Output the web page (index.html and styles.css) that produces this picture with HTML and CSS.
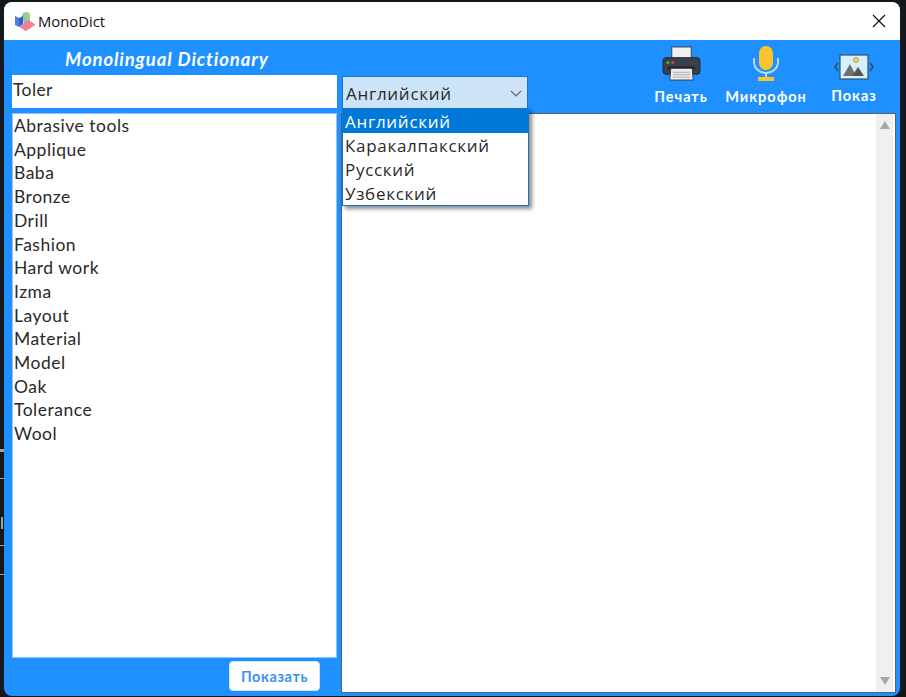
FILE: index.html
```html
<!DOCTYPE html>
<html lang="ru">
<head>
<meta charset="utf-8">
<title>MonoDict</title>
<link rel="stylesheet" href="styles.css">
</head>
<body>
<div class="behind" aria-hidden="true">
  <i class="bit bit-a"></i><i class="bit bit-b"></i><i class="bit bit-c"></i><i class="bit bit-d"></i><i class="bit bit-e"></i>
</div>
<div class="window">
  <header class="titlebar">
    <svg class="app-icon" viewBox="0 0 22 20" width="22" height="20">
      <path d="M7 8l2-6 4-1 3 2v7l-5 3z" fill="#8cc8a0"/>
      <path d="M10 3l3-2 3 2v6l-3 1V4z" fill="#a8cf7e"/>
      <path d="M1 5l4 2v9l-4-2z" fill="#4a7fe0"/>
      <path d="M5 7l4-2v8l-4 3z" fill="#2f62c4"/>
      <path d="M6 15l8-6 7 4-9 6z" fill="#f27f97"/>
      <path d="M6 15l6 4v1l-6-4z" fill="#d9536f"/>
      <path d="M12 19l9-6v1l-9 6z" fill="#e56a84"/>
    </svg>
    <span class="app-name">MonoDict</span>
    <svg class="close" viewBox="0 0 14 14" width="14" height="14"><path d="M1 1l12 12M13 1L1 13" stroke="#111" stroke-width="1.2" fill="none"/></svg>
  </header>
  <main class="content">
    <section class="left">
      <h1 class="brand">Monolingual Dictionary</h1>
      <div class="search">Toler</div>
      <ul class="words">
        <li>Abrasive tools</li><li>Applique</li><li>Baba</li><li>Bronze</li><li>Drill</li><li>Fashion</li><li>Hard work</li><li>Izma</li><li>Layout</li><li>Material</li><li>Model</li><li>Oak</li><li>Tolerance</li><li>Wool</li>
      </ul>
      <div class="actions"><button class="show">Показать</button></div>
    </section>
    <section class="right">
      <div class="topbar">
        <div class="select">
          <span>Английский</span>
          <svg viewBox="0 0 12 7" width="12" height="7"><path d="M1 1l5 5 5-5" stroke="#666" stroke-width="1.2" fill="none"/></svg>
          <ul class="menu">
            <li class="active">Английский</li><li>Каракалпакский</li><li>Русский</li><li>Узбекский</li>
          </ul>
        </div>
        <nav class="tools">
          <div class="tool tool-print">
            <svg viewBox="0 0 40 36" width="39" height="35">
              <rect x="10" y="1" width="20" height="14" fill="#f0f0f0" stroke="#3a3f48" stroke-width="1"/>
              <rect x="1" y="12" width="38" height="17" rx="3" fill="#3a3f4a" stroke="#23262c"/>
              <circle cx="6" cy="17" r="1.6" fill="#35b36b"/><circle cx="11" cy="17" r="1.6" fill="#d1492e"/>
              <rect x="6" y="21" width="28" height="3" fill="#1e2126"/>
              <path d="M9 23h22l1 12H8z" fill="#eeeeee" stroke="#3a3f48"/>
              <path d="M11 27h18M11 29.500h18M11 32h18" stroke="#aaa" stroke-width="1"/>
            </svg>
            <span>Печать</span>
          </div>
          <div class="tool tool-mic">
            <svg viewBox="0 0 28 36" width="28" height="36">
              <rect x="7" y="0" width="14" height="24" rx="7" fill="#fcc42c"/>
              <path d="M2 12v4a12 11 0 0 0 24 0v-4" fill="none" stroke="#bcd8f8" stroke-width="2"/>
              <path d="M14 27v4" stroke="#bcd8f8" stroke-width="2"/>
              <rect x="6" y="31" width="16" height="4" fill="#fcc42c"/>
            </svg>
            <span>Микрофон</span>
          </div>
          <div class="tool tool-show">
            <svg viewBox="0 0 42 26" width="42" height="26">
              <path d="M5 9l-3 4 3 4M37 9l3 4-3 4" fill="none" stroke="#27506e" stroke-width="1.600"/>
              <rect x="7" y="1" width="28" height="24" fill="#d8f0fb" stroke="#33526a" stroke-width="1.200"/>
              <circle cx="23" cy="6" r="2.500" fill="#f4d65a" stroke="#8a7a30" stroke-width=".6"/>
              <path d="M10 22l7-12 6 12z" fill="#6f6f6f"/>
              <path d="M19 22l6-9 6 9z" fill="#555"/>
            </svg>
            <span>Показ</span>
          </div>
        </nav>
      </div>
      <div class="panel">
        <div class="scrollbar">
          <svg viewBox="0 0 12 8" width="12" height="8"><path d="M1 8l5-8 5 8z" fill="#a8a8a8"/></svg>
          <svg viewBox="0 0 12 8" width="12" height="8"><path d="M1 0l5 8 5-8z" fill="#a8a8a8"/></svg>
        </div>
      </div>
    </section>
  </main>
</div>
</body>
</html>
```
FILE: styles.css
```css
* { box-sizing: border-box; }
html, body { margin: 0; height: 100%; }
body {
  background: #14171c;
  padding: 2px 6px 1px 4px;
  font-family: "Lato", "Liberation Sans", sans-serif;
  overflow: hidden;
}
.behind { position: absolute; left: 0; top: 0; width: 4px; height: 697px; overflow: hidden; }
.bit { position: absolute; left: 0; width: 4px; height: 1px; background: #9aa6b2; }
.bit-a { top: 449px; height: 3px; }
.bit-b { top: 478px; }
.bit-c { top: 517px; left: 1px; width: 2px; height: 12px; }
.bit-d { top: 545px; }
.bit-e { top: 574px; }
.window {
  height: 694px;
  display: flex;
  flex-direction: column;
  background: #1e90ff;
  border-radius: 8px;
  overflow: hidden;
}
.titlebar {
  height: 38px;
  flex: none;
  background: #fff;
  display: flex;
  align-items: center;
  padding-left: 10px;
  padding-right: 14px;
}
.app-icon { margin-right: 2px; }
.app-name { font-family: "Open Sans", sans-serif; font-size: 14.800px; color: #111; }
.close { margin-left: auto; }
.content {
  flex: 1;
  display: flex;
  padding-left: 8px;
  padding-right: 4px;
}
.left { width: 325px; flex: none; display: flex; flex-direction: column; margin-right: 4px; }
.brand {
  height: 35px;
  margin: 0;
  padding: 7px 0 0 53px;
  font-family: "Lato", sans-serif;
  font-style: italic;
  font-weight: 700;
  font-size: 18.500px;
  line-height: 24px;
  letter-spacing: 0.9px;
  color: #fff;
}
.search {
  height: 33px;
  background: #fff;
  font-size: 17.500px;
  letter-spacing: .4px;
  line-height: 30px;
  padding-left: 1px;
  color: #2a2a2a;
}
.words {
  list-style: none;
  height: 545px;
  margin: 5px 0 0;
  padding: 0 0 0 1px;
  background: #fff;
  border: 1px solid #8fc6ff;
  font-size: 17.500px;
  font-weight: 400;
  letter-spacing: .5px;
  line-height: 23.700px;
  color: #2a2a2a;
}
.actions { display: flex; justify-content: flex-end; padding: 3px 17px 0 0; }
.show {
  width: 91px;
  height: 30px;
  border: 1px solid #d0e4fa;
  border-radius: 4px;
  background: #fff;
  color: #3d92f0;
  font-family: "Lato", sans-serif;
  font-weight: 700;
  font-size: 14.500px;
  letter-spacing: .6px;
  padding: 0;
}
.right { flex: 1; min-width: 0; display: flex; flex-direction: column; }
.topbar { height: 73px; flex: none; display: flex; justify-content: space-between; }
.select {
  position: relative;
  width: 186px;
  height: 33px;
  margin: 36px 0 0 1px;
  background: #cde3f7;
  border: 1px solid #1a74c8;
  display: flex;
  align-items: center;
  justify-content: space-between;
  padding: 2px 5px 0 3px;
  font-family: "Open Sans", sans-serif;
  font-size: 17px;
  letter-spacing: .7px;
  color: #2a2a2a;
}
.menu {
  position: absolute;
  left: -1px;
  top: 31px;
  width: 187px;
  margin: 0;
  padding: 0;
  list-style: none;
  background: #fff;
  border: 1px solid #1a74c8;
  box-shadow: 3px 3px 4px rgba(0,0,0,.45);
  line-height: 25px;
  font-size: 17px;
  letter-spacing: .7px;
  color: #2a2a2a;
}
.menu li { padding-left: 2px; height: 24px; }
.menu .active { background: #0078d7; color: #fff; }
.tools { display: flex; align-items: flex-start; }
.tool { display: flex; flex-direction: column; align-items: center; color: #fff; font-weight: 700; font-size: 14.500px; letter-spacing: 1px; }
.tool svg { display: block; }
.tool span { line-height: 18px; }
.tool-print { width: 60px; padding-top: 6px; margin-right: 10px; }
.tool-print span { margin-top: 7px; }
.tool-mic { width: 90px; padding-top: 6px; margin-right: 18px; }
.tool-mic span { margin-top: 6px; }
.tool-show { width: 50px; padding-top: 14px; margin-right: 17px; }
.tool-show span { margin-top: 7px; }
.panel {
  flex: 1;
  margin-bottom: 3px;
  background: #fff;
  border: 1px solid #55606c;
  display: flex;
  justify-content: flex-end;
  padding-right: 2px;
}
.scrollbar {
  width: 17px;
  background: #f0f0f0;
  display: flex;
  flex-direction: column;
  justify-content: space-between;
  align-items: center;
  padding: 7px 0;
}
.scrollbar svg { display: block; }
```
